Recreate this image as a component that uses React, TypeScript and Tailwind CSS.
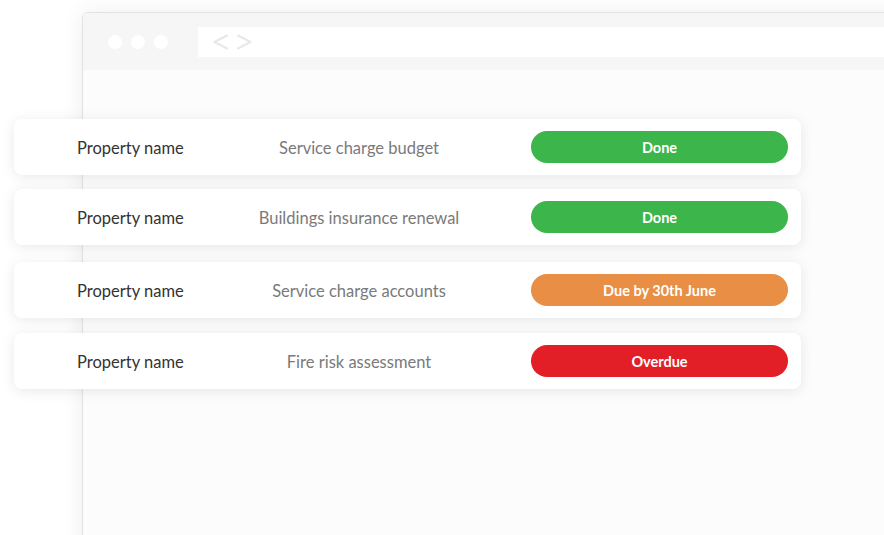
import React from "react";

const rows = [
  { task: "Service charge budget", status: "Done", color: "bg-[#3cb54b]", mt: "mt-0" },
  { task: "Buildings insurance renewal", status: "Done", color: "bg-[#3cb54b]", mt: "mt-[14px]" },
  { task: "Service charge accounts", status: "Due by 30th June", color: "bg-[#e88f45]", mt: "mt-[17px]" },
  { task: "Fire risk assessment", status: "Overdue", color: "bg-[#e21f27]", mt: "mt-[15px]" },
];

export default function App() {
  return (
    <div
      className="relative w-[884px] h-[535px] overflow-hidden bg-white"
      style={{ fontFamily: "Lato, 'Open Sans', sans-serif" }}
    >
      {/* Browser window */}
      <div className="absolute left-[82px] top-[12px] w-[840px] h-[560px] rounded-tl-[6px] border border-[#e2e2e2] bg-[#fcfcfc] shadow-[0_0_22px_rgba(0,0,0,0.07)] flex flex-col overflow-hidden">
        <div className="h-[57px] bg-[#f6f6f6] flex items-center pl-[25px]">
          <div className="flex gap-[9px]">
            <span className="w-[14px] h-[14px] rounded-full bg-white" />
            <span className="w-[14px] h-[14px] rounded-full bg-white" />
            <span className="w-[14px] h-[14px] rounded-full bg-white" />
          </div>
          <div className="ml-[30px] flex-1 h-[30px] bg-white flex items-center pl-[15px] gap-[9px]">
            <svg width="15" height="16" viewBox="0 0 15 16" fill="none" stroke="#e8e8e8" strokeWidth="2" strokeLinecap="round" strokeLinejoin="round">
              <polyline points="14,1.5 1.5,8 14,14.5" />
            </svg>
            <svg width="15" height="16" viewBox="0 0 15 16" fill="none" stroke="#e8e8e8" strokeWidth="2" strokeLinecap="round" strokeLinejoin="round">
              <polyline points="1,1.5 13.5,8 1,14.5" />
            </svg>
          </div>
        </div>
      </div>

      {/* Rows overlay */}
      <div className="absolute left-[14px] top-[119px] w-[787px] flex flex-col">
        {rows.map((r, i) => (
          <div
            key={i}
            className={`${r.mt} h-[56px] rounded-[8px] bg-white shadow-[0_2px_14px_rgba(0,0,0,0.09)] flex items-center pl-[63px] pr-[13px]`}
          >
            <span className="w-[141px] pt-[2px] text-[16.5px] text-[#333333] whitespace-nowrap">Property name</span>
            <span className="w-[282px] pt-[2px] text-center text-[16.5px] text-[#7a7a7a] whitespace-nowrap">{r.task}</span>
            <span
              className={`ml-auto w-[257px] h-[32px] pt-[1px] rounded-full ${r.color} flex items-center justify-center text-white text-[14.5px] font-bold`}
            >
              {r.status}
            </span>
          </div>
        ))}
      </div>
    </div>
  );
}
